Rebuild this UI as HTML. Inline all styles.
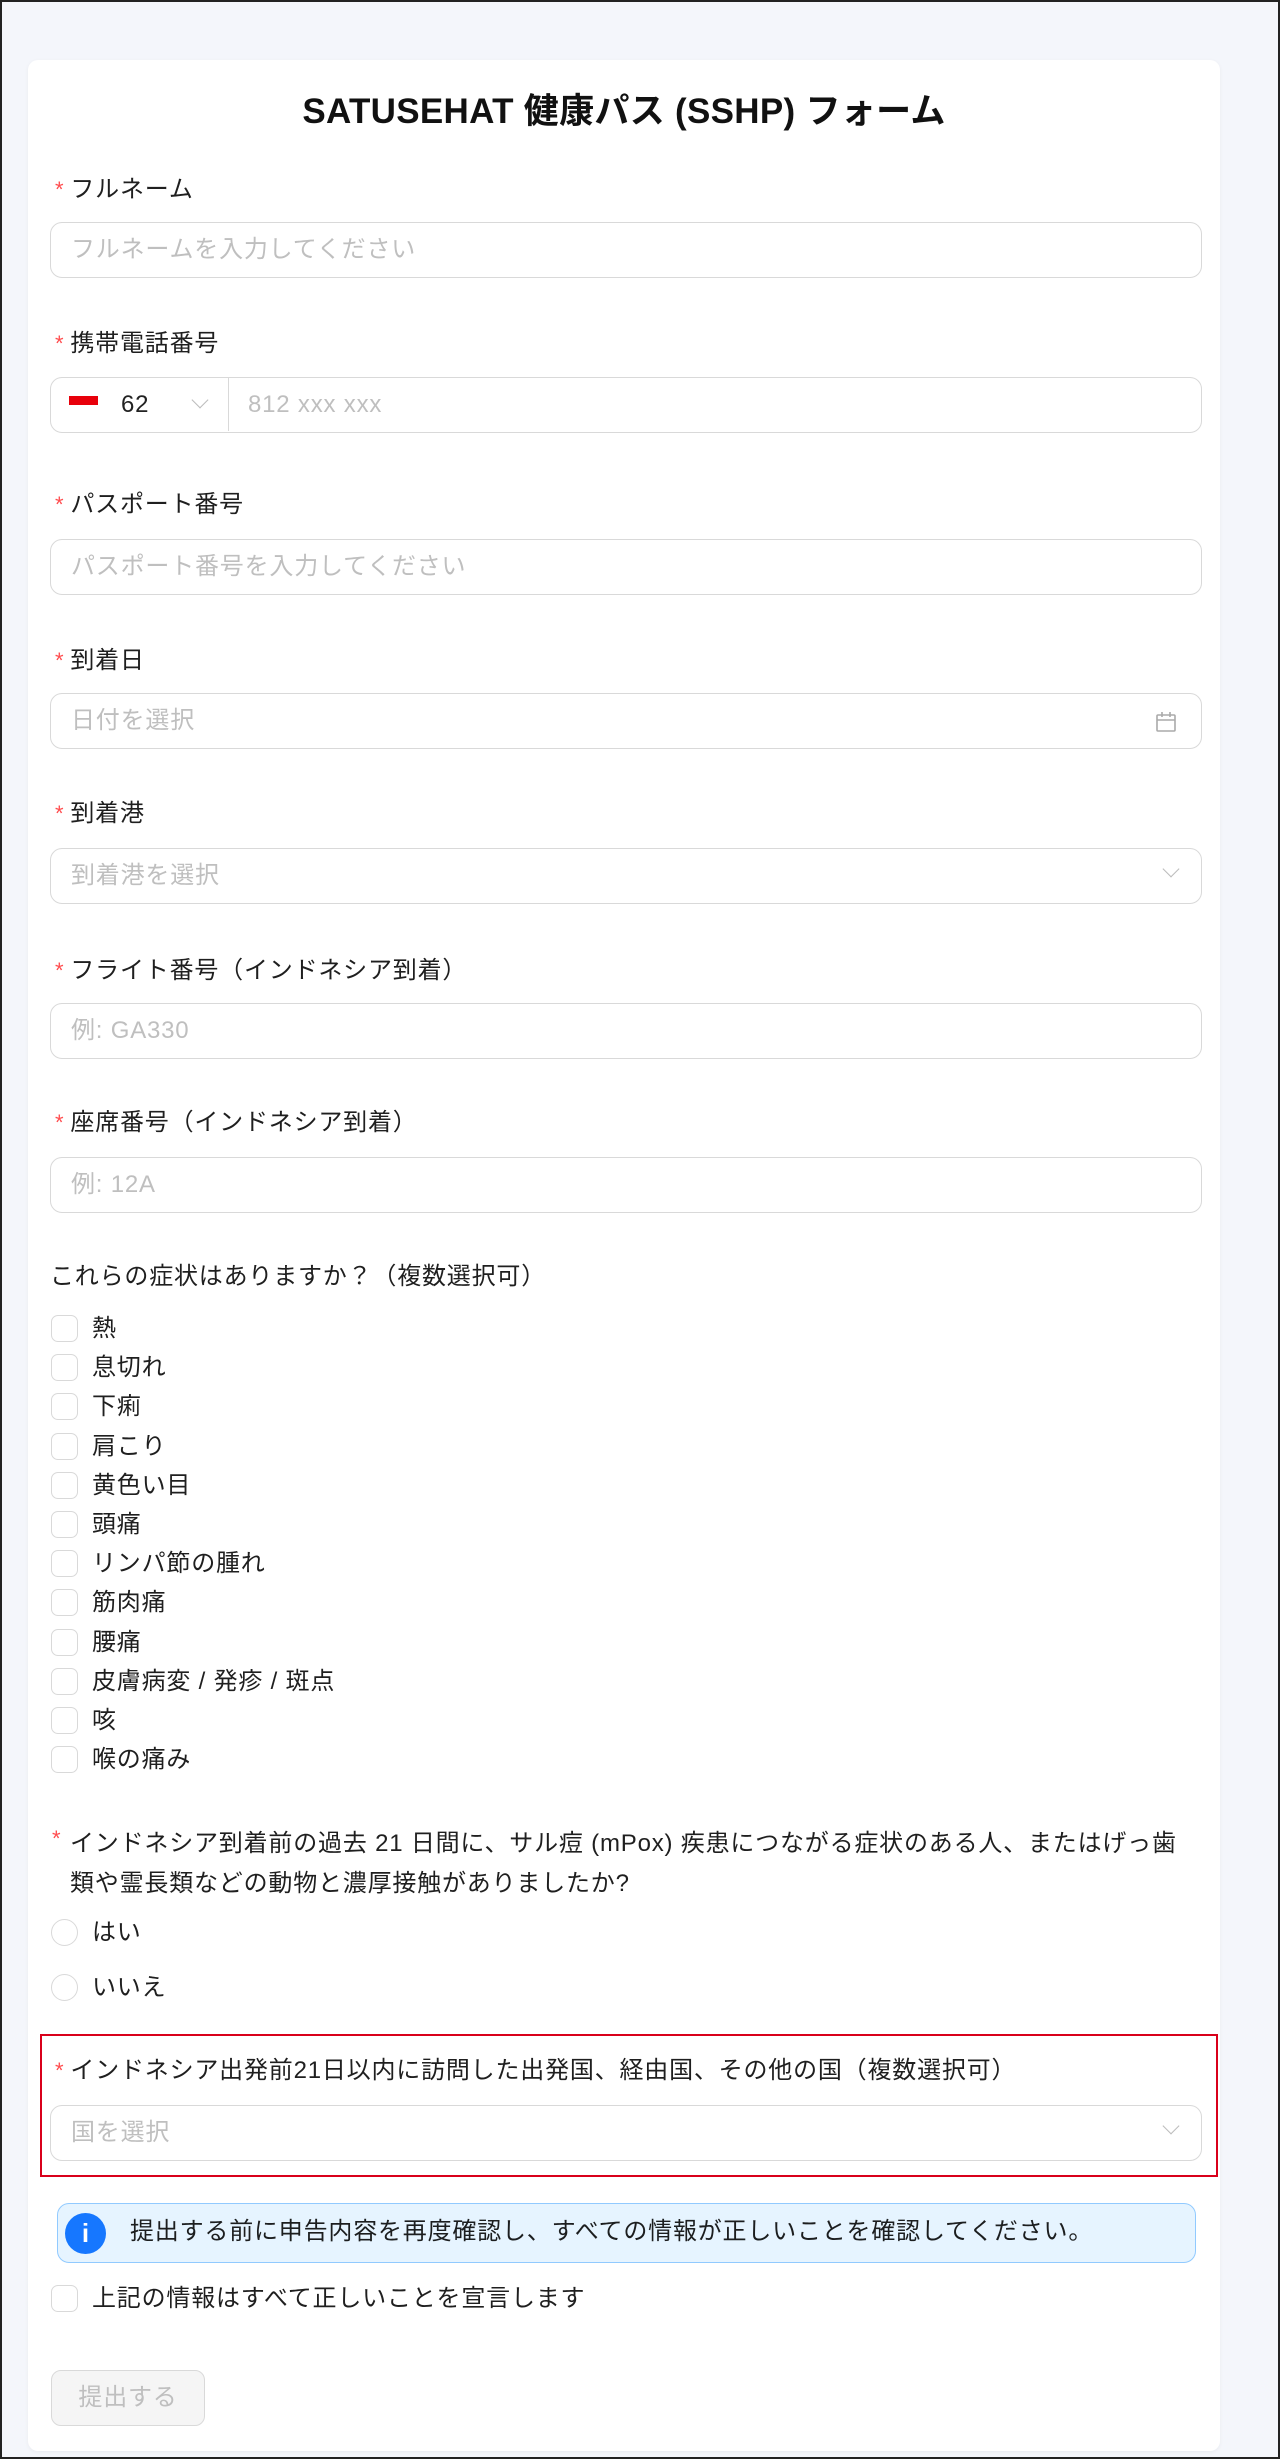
<!DOCTYPE html>
<html><head><meta charset="utf-8"><style>
*{box-sizing:border-box;margin:0;padding:0}
html,body{width:1280px;height:2459px;overflow:hidden}
body{background:#f4f6fb;font-family:"Liberation Sans","Noto Sans CJK JP",sans-serif;color:rgba(0,0,0,.88);position:relative;letter-spacing:0.8px}
.frame{position:absolute;left:0;top:0;width:1280px;height:2459px;border:2px solid #222;z-index:5;pointer-events:none}
.card{position:absolute;left:28px;top:60px;width:1192px;height:2391px;background:#fff;border-radius:10px;box-shadow:0 1px 4px rgba(0,0,0,.05)}
.a{position:absolute;white-space:nowrap}
.t{font-size:35px;font-weight:bold;left:0;width:1248px;text-align:center;top:83px;color:#111;letter-spacing:0.3px}
.lbl{font-size:24px;left:55px;line-height:30px}
.lbl .s{color:#ff4d4f;margin-right:6px;font-size:22px}
.inp{position:absolute;left:50px;width:1152px;height:56px;border:1.5px solid #d9d9d9;border-radius:12px;background:#fff}
.ph{position:absolute;left:20px;top:12px;font-size:24px;color:#bfbfbf;line-height:30px}
.cb{position:absolute;left:51px;width:27px;height:27px;border:1.5px solid #d9d9d9;border-radius:7px;background:#fff}
.rd{position:absolute;left:51px;width:27px;height:27px;border:1.5px solid #d9d9d9;border-radius:50%;background:#fff}
.ct{position:absolute;left:92px;font-size:24px;line-height:30px;white-space:nowrap}
.chev{position:absolute;width:12px;height:12px;border-right:1.5px solid #bbb;border-bottom:1.5px solid #bbb;transform:rotate(45deg)}
</style></head><body>
<div class="frame"></div>
<div class="card"></div>
<div class="a t">SATUSEHAT 健康パス (SSHP) フォーム</div>

<div class="a lbl" style="top:175px"><span class="s">*</span>フルネーム</div>
<div class="inp" style="top:222px"><div class="ph">フルネームを入力してください</div></div>

<div class="a lbl" style="top:329px"><span class="s">*</span>携帯電話番号</div>
<div class="inp" style="top:377px">
 <div style="position:absolute;left:18px;top:18px;width:29px;height:9px;background:#e8000b"></div>
 <div style="position:absolute;left:70px;top:12px;font-size:24px;line-height:30px;color:#222">62</div>
 <div class="chev" style="left:143px;top:16px"></div>
 <div style="position:absolute;left:177px;top:0;width:1px;height:53px;background:#d9d9d9"></div>
 <div class="ph" style="left:197px">812 xxx xxx</div>
</div>

<div class="a lbl" style="top:490px"><span class="s">*</span>パスポート番号</div>
<div class="inp" style="top:539px"><div class="ph">パスポート番号を入力してください</div></div>

<div class="a lbl" style="top:646px"><span class="s">*</span>到着日</div>
<div class="inp" style="top:693px"><div class="ph">日付を選択</div>
 <svg style="position:absolute;left:1104px;top:17px" width="22" height="22" viewBox="0 0 22 22" fill="none" stroke="#aaa" stroke-width="1.6"><rect x="2" y="4" width="18" height="16" rx="1"/><path d="M2 9h18M7 1v5M15 1v5"/></svg>
</div>

<div class="a lbl" style="top:799px"><span class="s">*</span>到着港</div>
<div class="inp" style="top:848px"><div class="ph">到着港を選択</div><div class="chev" style="left:1114px;top:14px"></div></div>

<div class="a lbl" style="top:956px"><span class="s">*</span>フライト番号（インドネシア到着）</div>
<div class="inp" style="top:1003px"><div class="ph">例: GA330</div></div>

<div class="a lbl" style="top:1108px"><span class="s">*</span>座席番号（インドネシア到着）</div>
<div class="inp" style="top:1157px"><div class="ph">例: 12A</div></div>

<div class="a lbl" style="top:1262px;left:50px">これらの症状はありますか？（複数選択可）</div>

<div class="cb" style="top:1315px"></div><div class="ct" style="top:1314px">熱</div>
<div class="cb" style="top:1354px"></div><div class="ct" style="top:1353px">息切れ</div>
<div class="cb" style="top:1393px"></div><div class="ct" style="top:1392px">下痢</div>
<div class="cb" style="top:1433px"></div><div class="ct" style="top:1432px">肩こり</div>
<div class="cb" style="top:1472px"></div><div class="ct" style="top:1471px">黄色い目</div>
<div class="cb" style="top:1511px"></div><div class="ct" style="top:1510px">頭痛</div>
<div class="cb" style="top:1550px"></div><div class="ct" style="top:1549px">リンパ節の腫れ</div>
<div class="cb" style="top:1589px"></div><div class="ct" style="top:1588px">筋肉痛</div>
<div class="cb" style="top:1629px"></div><div class="ct" style="top:1628px">腰痛</div>
<div class="cb" style="top:1668px"></div><div class="ct" style="top:1667px">皮膚病変 / 発疹 / 斑点</div>
<div class="cb" style="top:1707px"></div><div class="ct" style="top:1706px">咳</div>
<div class="cb" style="top:1746px"></div><div class="ct" style="top:1745px">喉の痛み</div>

<div class="a" style="left:52px;top:1826px;color:#ff4d4f;font-size:22px">*</div>
<div class="a" style="left:70px;top:1824px;font-size:24px;line-height:40px">インドネシア到着前の過去 21 日間に、サル痘 (mPox) 疾患につながる症状のある人、またはげっ歯<br>類や霊長類などの動物と濃厚接触がありましたか?</div>

<div class="rd" style="top:1919px"></div><div class="ct" style="top:1918px">はい</div>
<div class="rd" style="top:1974px"></div><div class="ct" style="top:1973px">いいえ</div>

<div style="position:absolute;left:40px;top:2034px;width:1178px;height:143px;border:2px solid #d9001b"></div>
<div class="a lbl" style="top:2056px"><span class="s">*</span>インドネシア出発前21日以内に訪問した出発国、経由国、その他の国（複数選択可）</div>
<div class="inp" style="top:2105px"><div class="ph">国を選択</div><div class="chev" style="left:1114px;top:14px"></div></div>

<div style="position:absolute;left:57px;top:2203px;width:1139px;height:60px;background:#e6f4ff;border:1.5px solid #91caff;border-radius:12px">
 <div style="position:absolute;left:7px;top:9px;width:41px;height:41px;border-radius:50%;background:#1677ff;color:#fff;font-size:26px;line-height:41px;text-align:center;font-weight:bold;letter-spacing:0">i</div>
 <div style="position:absolute;left:72px;top:13px;font-size:24px;line-height:30px;white-space:nowrap">提出する前に申告内容を再度確認し、すべての情報が正しいことを確認してください。</div>
</div>

<div class="cb" style="top:2285px"></div><div class="ct" style="top:2284px">上記の情報はすべて正しいことを宣言します</div>

<div style="position:absolute;left:51px;top:2370px;width:154px;height:56px;background:#f5f5f5;border:1.5px solid #d9d9d9;border-radius:10px;color:#bfbfbf;font-size:24px;line-height:53px;text-align:center">提出する</div>
</body></html>
